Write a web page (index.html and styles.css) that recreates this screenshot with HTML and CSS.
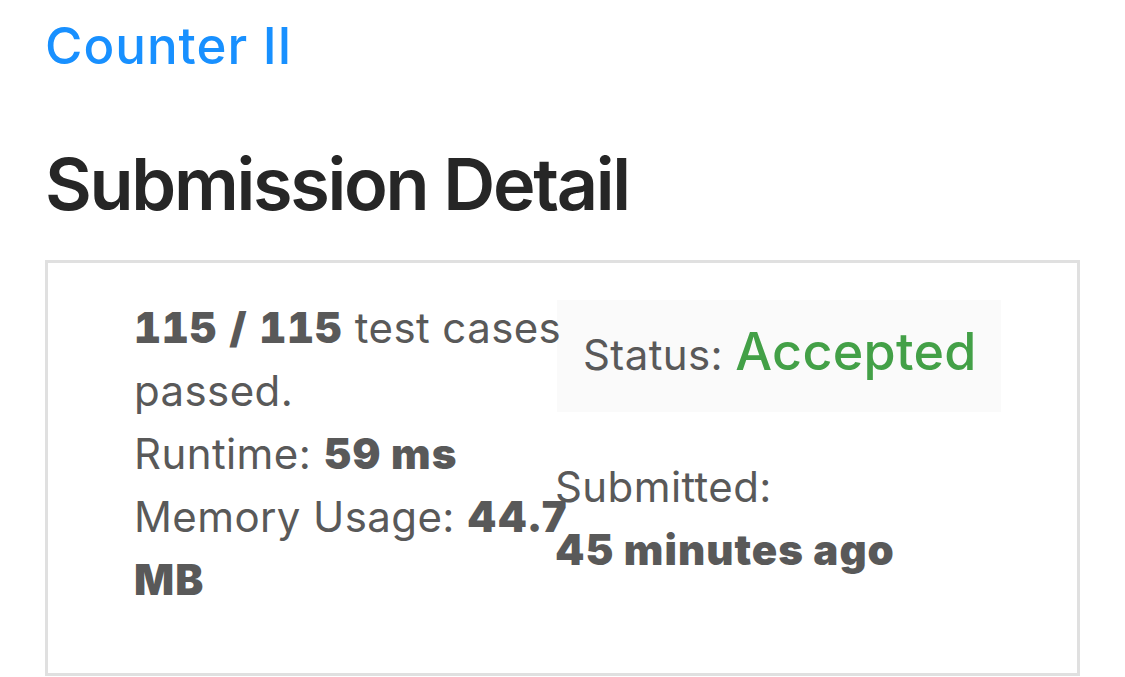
FILE: index.html
```html
<!DOCTYPE html>
<html lang="en">
<head>
  <meta charset="UTF-8">
  <meta name="viewport" content="width=device-width, initial-scale=1.0">
  <title>Submission Detail</title>
  <link rel="stylesheet" href="styles.css">
</head>
<body>
  <div id="page">
    <a class="problem-link" href="#">Counter II</a>
    <h1>Submission Detail</h1>

    <div id="detail">
      <div class="result">
        <div><b class="count">115 / 115</b> test cases<br>passed.</div>
        <div>Runtime: <b>59 ms</b></div>
        <div>Memory Usage: <b>44.7<br>MB</b></div>
      </div>

      <div class="meta">
        <div class="status">Status: <span class="accepted">Accepted</span></div>
        <div class="submitted">Submitted:<br><b>45 minutes ago</b></div>
      </div>
    </div>
  </div>
</body>
</html>
```

FILE: styles.css
```css
body {
  font-family: 'Inter', 'Noto Sans', sans-serif;
  background: #fff;
  margin: 0;
}

#page {
  padding: 16px 45px 0;
}

.problem-link {
  display: block;
  font-size: 51px;
  line-height: 60px;
  font-weight: 500;
  color: #1890ff;
  text-decoration: none;
  letter-spacing: 1px;
}

h1 {
  font-size: 72px;
  line-height: 86px;
  font-weight: 600;
  color: #262626;
  margin: 65px 0 33px;
  letter-spacing: -2.3px;
}

#detail {
  border: 3px solid #e0e0e0;
  padding: 33px 0 62px 86px;
  display: grid;
  grid-template-columns: 421px 1fr;
  font-size: 42px;
  line-height: 63px;
  color: #595959;
  letter-spacing: 0.4px;
}

#detail b {
  font-weight: 900;
  letter-spacing: 1px;
}

#detail b.count {
  font-variant-numeric: tabular-nums;
  letter-spacing: 0.7px;
}

.result {
  white-space: nowrap;
  position: relative;
  z-index: 1;
}

.status {
  background: #fafafa;
  width: 444px;
  height: 112px;
  box-sizing: border-box;
  margin: 4px 0 0 2px;
  padding-left: 26px;
  line-height: 103px;
}

.accepted {
  font-size: 52px;
  font-weight: 500;
  color: #43a047;
  letter-spacing: 0.3px;
}

.submitted {
  margin-top: 43px;
}
```
